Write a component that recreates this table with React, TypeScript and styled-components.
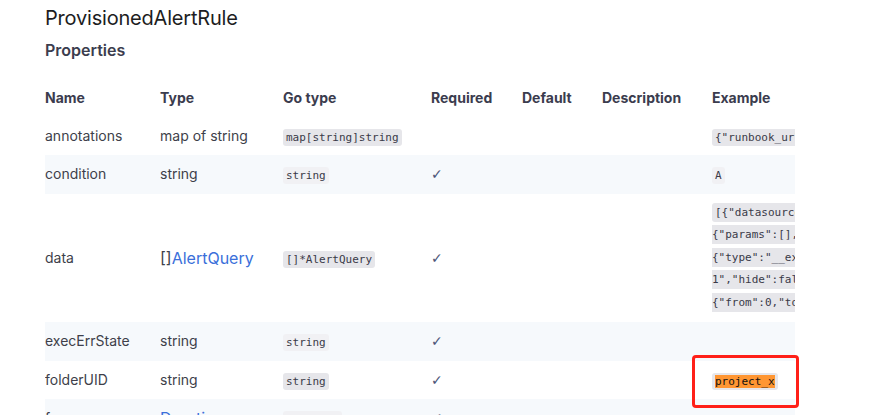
import React from "react";
import styled, { createGlobalStyle } from "styled-components";

const Global = createGlobalStyle`
  html, body { margin: 0; padding: 0; background: #ffffff; }
  body { font-family: Inter, "Noto Sans", sans-serif; overflow: hidden; }
`;

const Page = styled.div`
  position: relative;
  width: 876px;
  height: 415px;
  padding-left: 45px;
  box-sizing: border-box;
  overflow: hidden;
`;

const Title = styled.h1`
  margin: 6px 0 0;
  font-size: 20px;
  line-height: 24px;
  font-weight: 400;
  color: #1d1d22;
  letter-spacing: -0.2px;
`;

const Subtitle = styled.h2`
  margin: 10px 0 0;
  font-size: 16px;
  line-height: 20px;
  font-weight: 600;
  color: #3c3d4e;
`;

const Clip = styled.div`
  margin-top: 18px;
  width: 750px;
  overflow: hidden;
`;

const Table = styled.table`
  width: 960px;
  table-layout: fixed;
  border-collapse: collapse;
  border-spacing: 0;
`;

const HeadCell = styled.th<{ $w: number }>`
  box-sizing: border-box;
  width: ${(p) => p.$w}px;
  text-align: left;
  padding: 8.5px 8px 8px 0;
  font-size: 14px;
  line-height: 22px;
  font-weight: 700;
  color: #3b3c4e;
  white-space: nowrap;
`;

const Row = styled.tr<{ $striped?: boolean }>`
  background: ${(p) => (p.$striped ? "#f6f9fc" : "#ffffff")};
`;

const Cell = styled.td`
  box-sizing: border-box;
  padding: 8px 8px 8px 0;
  font-size: 14px;
  line-height: 22.5px;
  color: #3e3f4a;
  vertical-align: middle;
  white-space: nowrap;
  overflow: hidden;
`;

const TypeCell = styled(Cell)<{ $large?: boolean }>`
  font-size: ${(p) => (p.$large ? "16px" : "14px")};
`;

const Link = styled.a`
  color: #3a6fda;
  text-decoration: none;
`;

const Code = styled.code<{ $soft?: boolean }>`
  font-family: "DejaVu Sans Mono", "Liberation Mono", monospace;
  font-size: 11px;
  line-height: 17px;
  padding: 2px 3px;
  border-radius: 3px;
  color: #3a3a48;
  background: ${(p) => (p.$soft ? "#f1f1f4" : "#e6e6ea")};
`;

const ExampleBlock = styled.div`
  font-family: "DejaVu Sans Mono", "Liberation Mono", monospace;
  font-size: 11px;
  line-height: 22.5px;
`;

const ExampleCode = styled(Code)`
  white-space: pre;
  line-height: 22.5px;
  padding: 3px 3px;
`;

const Check = styled.span`
  font-family: "DejaVu Sans", sans-serif;
  font-size: 14px;
  color: #4c5578;
`;

const Highlight = styled.mark`
  background: #ff9632;
  color: #111111;
`;

const Callout = styled.div`
  position: absolute;
  left: 692px;
  top: 355px;
  width: 107px;
  height: 53px;
  box-sizing: border-box;
  border: 3px solid #ff2018;
  border-radius: 4px;
  pointer-events: none;
`;

const cols: [string, number][] = [
  ["Name", 115],
  ["Type", 123],
  ["Go type", 148],
  ["Required", 91],
  ["Default", 80],
  ["Description", 110],
  ["Example", 293],
];

const dataExample =
  '[{"datasourceUid":"__expr__","model":{"conditions":[{"evaluator":\n' +
  '{"params":[],"type":"gt"},"operator":{"type":"and"},"query":\n' +
  '{"type":"__expr__","uid":"__expr__"},"expression":"1==\n' +
  '1","hide":false,"intervalMs":1000,"maxDataPoints":43200,\n' +
  '{"from":0,"to":0}}]';

export default function App() {
  return (
    <>
      <Global />
      <Page>
        <Title>ProvisionedAlertRule</Title>
        <Subtitle>Properties</Subtitle>
        <Clip>
          <Table>
            <thead>
              <tr>
                {cols.map(([n, w]) => (
                  <HeadCell key={n} $w={w}>
                    {n}
                  </HeadCell>
                ))}
              </tr>
            </thead>
            <tbody>
              <Row>
                <Cell>annotations</Cell>
                <TypeCell>map of string</TypeCell>
                <Cell>
                  <Code>map[string]string</Code>
                </Cell>
                <Cell />
                <Cell />
                <Cell />
                <Cell>
                  <Code>{'{"runbook_url":"https://example.com/runbook"}'}</Code>
                </Cell>
              </Row>
              <Row $striped>
                <Cell>condition</Cell>
                <TypeCell>string</TypeCell>
                <Cell>
                  <Code $soft>string</Code>
                </Cell>
                <Cell>
                  <Check>✓</Check>
                </Cell>
                <Cell />
                <Cell />
                <Cell>
                  <Code $soft>A</Code>
                </Cell>
              </Row>
              <Row>
                <Cell>data</Cell>
                <TypeCell $large>
                  []<Link href="#">AlertQuery</Link>
                </TypeCell>
                <Cell>
                  <Code>[]*AlertQuery</Code>
                </Cell>
                <Cell>
                  <Check>✓</Check>
                </Cell>
                <Cell />
                <Cell />
                <Cell>
                  <ExampleBlock>
                    <ExampleCode>{dataExample}</ExampleCode>
                  </ExampleBlock>
                </Cell>
              </Row>
              <Row $striped>
                <Cell>execErrState</Cell>
                <TypeCell>string</TypeCell>
                <Cell>
                  <Code $soft>string</Code>
                </Cell>
                <Cell>
                  <Check>✓</Check>
                </Cell>
                <Cell />
                <Cell />
                <Cell />
              </Row>
              <Row>
                <Cell>folderUID</Cell>
                <TypeCell>string</TypeCell>
                <Cell>
                  <Code>string</Code>
                </Cell>
                <Cell>
                  <Check>✓</Check>
                </Cell>
                <Cell />
                <Cell />
                <Cell>
                  <Code>
                    <Highlight>project_x</Highlight>
                  </Code>
                </Cell>
              </Row>
              <Row $striped>
                <Cell>for</Cell>
                <TypeCell $large>
                  <Link href="#">Duration</Link>
                </TypeCell>
                <Cell>
                  <Code $soft>Duration</Code>
                </Cell>
                <Cell>
                  <Check>✓</Check>
                </Cell>
                <Cell />
                <Cell />
                <Cell />
              </Row>
            </tbody>
          </Table>
        </Clip>
        <Callout />
      </Page>
    </>
  );
}
